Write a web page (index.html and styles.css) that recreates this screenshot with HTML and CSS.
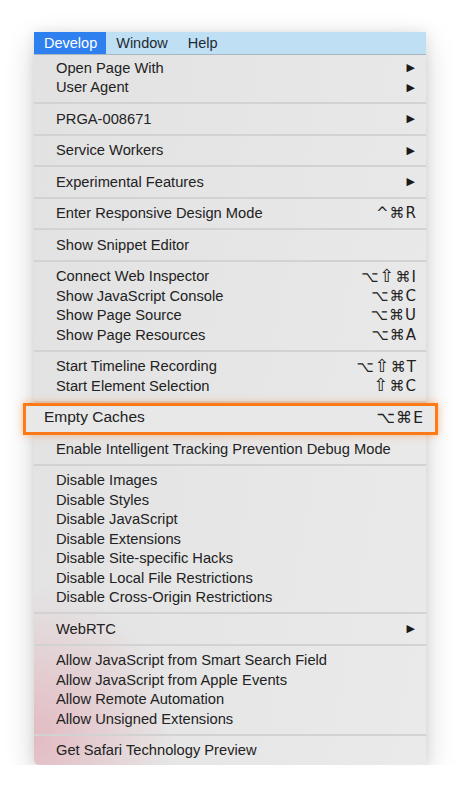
FILE: index.html
```html
<!DOCTYPE html>
<html>
<head>
<meta charset="utf-8">
<link rel="stylesheet" href="styles.css">
</head>
<body>
<div class="menu">
  <div class="menubar">
    <span class="mb-item active">Develop</span>
    <span class="mb-item">Window</span>
    <span class="mb-item">Help</span>
  </div>
  <div class="dropdown">
    <div class="row"><span>Open Page With</span><span class="arrow">▶</span></div>
    <div class="row"><span>User Agent</span><span class="arrow">▶</span></div>
    <div class="sep"></div>
    <div class="row"><span>PRGA-008671</span><span class="arrow">▶</span></div>
    <div class="sep"></div>
    <div class="row"><span>Service Workers</span><span class="arrow">▶</span></div>
    <div class="sep"></div>
    <div class="row"><span>Experimental Features</span><span class="arrow">▶</span></div>
    <div class="sep"></div>
    <div class="row"><span>Enter Responsive Design Mode</span><span class="key">^⌘R</span></div>
    <div class="sep"></div>
    <div class="row"><span>Show Snippet Editor</span></div>
    <div class="sep"></div>
    <div class="row"><span>Connect Web Inspector</span><span class="key">⌥<span class="shift">⇧</span>⌘I</span></div>
    <div class="row"><span>Show JavaScript Console</span><span class="key">⌥⌘C</span></div>
    <div class="row"><span>Show Page Source</span><span class="key">⌥⌘U</span></div>
    <div class="row"><span>Show Page Resources</span><span class="key">⌥⌘A</span></div>
    <div class="sep"></div>
    <div class="row"><span>Start Timeline Recording</span><span class="key">⌥<span class="shift">⇧</span>⌘T</span></div>
    <div class="row"><span>Start Element Selection</span><span class="key"><span class="shift">⇧</span>⌘C</span></div>
    <div class="sep"></div>
    <div class="row hl"><span class="hl-label">Empty Caches</span><span class="key hl-key">⌥⌘E</span></div>
    <div class="sep"></div>
    <div class="row"><span>Enable Intelligent Tracking Prevention Debug Mode</span></div>
    <div class="sep"></div>
    <div class="row"><span>Disable Images</span></div>
    <div class="row"><span>Disable Styles</span></div>
    <div class="row"><span>Disable JavaScript</span></div>
    <div class="row"><span>Disable Extensions</span></div>
    <div class="row"><span>Disable Site-specific Hacks</span></div>
    <div class="row"><span>Disable Local File Restrictions</span></div>
    <div class="row"><span>Disable Cross-Origin Restrictions</span></div>
    <div class="sep"></div>
    <div class="row"><span>WebRTC</span><span class="arrow">▶</span></div>
    <div class="sep"></div>
    <div class="row"><span>Allow JavaScript from Smart Search Field</span></div>
    <div class="row"><span>Allow JavaScript from Apple Events</span></div>
    <div class="row"><span>Allow Remote Automation</span></div>
    <div class="row"><span>Allow Unsigned Extensions</span></div>
    <div class="sep"></div>
    <div class="row"><span>Get Safari Technology Preview</span></div>
  </div>
</div>
</body>
</html>
```
FILE: styles.css
```css
html, body {
  margin: 0;
  padding: 0;
  background: #ffffff;
}
body {
  font-family: "Liberation Sans", Arial, sans-serif;
  color: #222222;
}
.menu {
  width: 392px;
  margin: 32px 0 0 34px;
  box-shadow: 0 10px 30px rgba(0, 0, 0, 0.18), 0 0 12px rgba(0, 0, 0, 0.08);
  border-radius: 0 0 5px 5px;
}
.menubar {
  display: flex;
  height: 22px;
  background: #bfe0f4;
  border-bottom: 1px solid #a8b6c0;
}
.mb-item {
  padding: 0 10px;
  font-size: 14.5px;
  line-height: 22px;
  color: #1e2a33;
}
.mb-item.active {
  background: #2f80ef;
  color: #ffffff;
  padding: 0 9px 0 10px;
}
.dropdown {
  padding: 3px 0 5px;
  border-radius: 0 0 5px 5px;
  background:
    radial-gradient(ellipse 140px 150px at 0% 96%, rgba(226, 160, 172, 0.6), rgba(226, 160, 172, 0) 100%),
    linear-gradient(100deg, #e2e2e2 0%, #e6e6e6 50%, #eaeaea 100%);
}
.row {
  display: flex;
  align-items: center;
  justify-content: space-between;
  height: 19.5px;
  padding: 0 9px 0 22px;
  font-size: 14.7px;
  white-space: nowrap;
}
.arrow {
  font-family: "DejaVu Sans", sans-serif;
  font-size: 11px;
  color: #1a1a1a;
  margin-right: 2px;
}
.key {
  font-family: "DejaVu Sans", sans-serif;
  font-size: 15px;
  letter-spacing: 1px;
  color: #222222;
}
.shift {
  font-size: 18px;
  line-height: 1;
}
.sep {
  height: 2px;
  margin: 5px 0;
  background: #d2d2d2;
}
.row.hl {
  position: relative;
  padding: 0 2px 0 10px;
}
.row.hl::before {
  content: "";
  position: absolute;
  top: -5px;
  bottom: -8px;
  left: -11px;
  right: -12px;
  background: #e8e8e8;
  border: 3px solid #ff7a16;
  box-shadow: 0 0 8px rgba(255, 122, 22, 0.45);
}
.hl-label {
  position: relative;
  font-size: 15.5px;
}
.hl-key {
  position: relative;
  font-size: 16px;
}
```
